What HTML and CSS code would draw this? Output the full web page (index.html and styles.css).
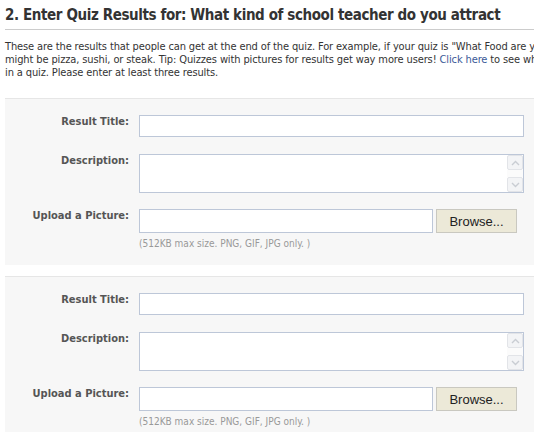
FILE: index.html
```html
<!DOCTYPE html>
<html>
<head>
<meta charset="utf-8">
<link rel="stylesheet" href="styles.css">
</head>
<body>
<div class="page">
  <h1 class="title">2. Enter Quiz Results for: What kind of school teacher do you attract</h1>
  <p class="intro">These are the results that people can get at the end of the quiz. For example, if your quiz is "What Food are you?", the results<br>might be pizza, sushi, or steak. Tip: Quizzes with pictures for results get way more users! <a href="#" class="link">Click here</a> to see what a good result looks like<br>in a quiz. Please enter at least three results.</p>

  <div class="panel">
    <div class="row">
      <label class="label">Result Title:</label>
      <input class="field" type="text">
    </div>
    <div class="row">
      <label class="label">Description:</label>
      <div class="area">
        <textarea class="area-input"></textarea>
        <div class="scroll">
          <span class="sbtn"><svg width="9" height="6" viewBox="0 0 9 6"><path d="M1 5 L4.5 1.5 L8 5" fill="none" stroke="#c9cdd3" stroke-width="1.4"/></svg></span>
          <span class="strack"></span>
          <span class="sbtn"><svg width="9" height="6" viewBox="0 0 9 6"><path d="M1 1 L4.5 4.5 L8 1" fill="none" stroke="#c9cdd3" stroke-width="1.4"/></svg></span>
        </div>
      </div>
    </div>
    <div class="row row-upload">
      <label class="label">Upload a Picture:</label>
      <div class="upload">
        <div class="upload-line">
          <input class="file" type="text">
          <button class="browse" type="button">Browse...</button>
        </div>
        <div class="hint">(512KB max size. PNG, GIF, JPG only. )</div>
      </div>
    </div>
  </div>

  <div class="panel">
    <div class="row">
      <label class="label">Result Title:</label>
      <input class="field" type="text">
    </div>
    <div class="row">
      <label class="label">Description:</label>
      <div class="area">
        <textarea class="area-input"></textarea>
        <div class="scroll">
          <span class="sbtn"><svg width="9" height="6" viewBox="0 0 9 6"><path d="M1 5 L4.5 1.5 L8 5" fill="none" stroke="#c9cdd3" stroke-width="1.4"/></svg></span>
          <span class="strack"></span>
          <span class="sbtn"><svg width="9" height="6" viewBox="0 0 9 6"><path d="M1 1 L4.5 4.5 L8 1" fill="none" stroke="#c9cdd3" stroke-width="1.4"/></svg></span>
        </div>
      </div>
    </div>
    <div class="row row-upload">
      <label class="label">Upload a Picture:</label>
      <div class="upload">
        <div class="upload-line">
          <input class="file" type="text">
          <button class="browse" type="button">Browse...</button>
        </div>
        <div class="hint">(512KB max size. PNG, GIF, JPG only. )</div>
      </div>
    </div>
  </div>
</div>
</body>
</html>
```

FILE: styles.css
```css
html, body {
  margin: 0;
  padding: 0;
  background: #fff;
}
body {
  width: 534px;
  height: 432px;
  overflow: hidden;
  font-family: "DejaVu Sans Condensed", "DejaVu Sans", sans-serif;
  color: #333;
}
.page {
  padding-left: 5px;
  width: 600px;
}
.title {
  margin: 0;
  padding: 6px 0 5px;
  font-size: 15px;
  line-height: 18px;
  font-weight: bold;
  letter-spacing: -0.4px;
  color: #333;
  white-space: nowrap;
  border-bottom: 1px solid #cccccc;
}
.intro {
  margin: 10px 0 0;
  font-size: 11px;
  line-height: 13px;
  letter-spacing: -0.12px;
  white-space: nowrap;
  color: #333;
}
.link {
  color: #3b5998;
  text-decoration: none;
}
.panel {
  margin-top: 19px;
  background: #f7f7f7;
  border-top: 1px solid #e6e6e6;
  padding: 16px 0 15px;
}
.panel + .panel {
  margin-top: 11px;
}
.row {
  display: grid;
  grid-template-columns: 124px auto;
  column-gap: 10px;
  align-items: start;
}
.row + .row {
  margin-top: 17px;
}
.row-upload {
  margin-top: 16px !important;
}
.label {
  text-align: right;
  font-size: 11px;
  line-height: 14px;
  font-weight: bold;
  color: #555;
  padding-top: 0;
}
.field {
  box-sizing: border-box;
  width: 385px;
  height: 22px;
  margin: 0;
  border: 1px solid #bdc7d8;
  background: #fff;
  padding: 2px 3px;
}
.area {
  box-sizing: border-box;
  width: 385px;
  height: 39px;
  border: 1px solid #bdc7d8;
  background: #fff;
  display: flex;
}
.area-input {
  flex: 1;
  border: 0;
  margin: 0;
  padding: 2px 3px;
  resize: none;
  outline: none;
  background: #fff;
}
.scroll {
  width: 16px;
  display: flex;
  flex-direction: column;
}
.sbtn {
  box-sizing: border-box;
  height: 15px;
  border: 1px solid #e2e4e8;
  background: #f3f4f6;
  display: flex;
  align-items: center;
  justify-content: center;
  border-radius: 2px;
}
.strack {
  flex: 1;
  background: #fbfbfb;
}
.upload-line {
  display: flex;
  gap: 3px;
}
.file {
  box-sizing: border-box;
  width: 294px;
  height: 24px;
  margin: 0;
  border: 1px solid #bdc7d8;
  background: #fff;
}
.browse {
  box-sizing: border-box;
  width: 81px;
  height: 24px;
  margin: 0;
  padding: 0;
  border: 1px solid #c9c8c0;
  background: #ece9d8;
  font-family: "Liberation Sans", Arial, sans-serif;
  font-size: 13px;
  color: #222;
}
.hint {
  margin-top: 5px;
  font-size: 10px;
  line-height: 12px;
  color: #999;
}
```
